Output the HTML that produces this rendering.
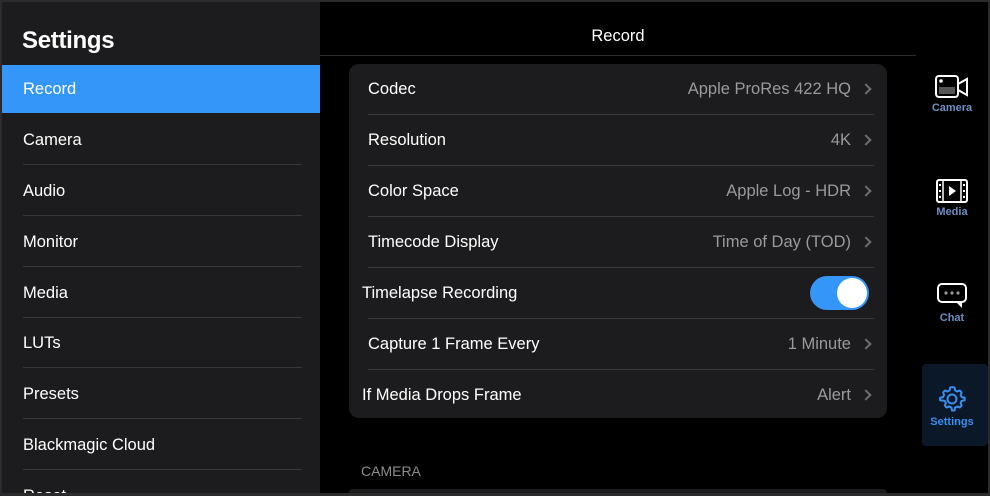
<!DOCTYPE html>
<html><head><style>
*{margin:0;padding:0;box-sizing:border-box}
html,body{width:990px;height:496px;overflow:hidden}
body{background:#2b2b2b;font-family:"Liberation Sans",sans-serif;position:relative}
#f{position:absolute;left:2px;top:2px;width:986px;height:491px;background:#000;overflow:hidden}
#side{position:absolute;left:0;top:0;width:318px;height:491px;background:#1c1c1e}
#side h1{position:absolute;left:20px;top:25px;font-size:24px;color:#fff;font-weight:bold;letter-spacing:-0.3px}
.si{position:absolute;left:0;width:318px;height:50px;color:#fff;font-size:16.5px;line-height:50px;padding-left:21px}
.si:after{content:"";position:absolute;left:21px;right:18px;bottom:0;height:1px;background:#38383a}
.sel{background:#3396f8;height:48px;line-height:48px}
.sel:after{display:none}
#main{position:absolute;left:318px;top:0;width:596px;height:491px;background:#000}
#hdr{position:absolute;left:0;top:0;width:596px;height:54px;border-bottom:1px solid #2c2c2e;color:#fff;font-size:16.5px;text-align:center;line-height:68px}
#card{position:absolute;left:29px;top:62px;width:538px;height:354px;background:#1c1c1e;border-radius:10px}
.r{position:absolute;left:0;width:538px;height:51px;color:#fff;font-size:16.5px;line-height:51px;padding-left:19px}
.r:after{content:"";position:absolute;left:19px;right:13px;bottom:0;height:1px;background:#3a3a3c}
.r.l:after{display:none}
.v{position:absolute;right:36px;top:0;color:#9a9a9e}
.c{position:absolute;right:17px;top:21px;width:8px;height:8px;border-right:2px solid #6e6e72;border-top:2px solid #6e6e72;transform:rotate(45deg)}
.tg{position:absolute;left:461px;top:8px;width:59px;height:34px;border-radius:17px;background:#3396f8}
.tg i{position:absolute;right:2px;top:2px;width:30px;height:30px;border-radius:50%;background:#fff}
#cam{position:absolute;left:41px;top:461px;color:#8e8e92;font-size:14px}
#card2{position:absolute;left:29px;top:487px;width:538px;height:4px;background:#1c1c1e;border-radius:10px 10px 0 0}
#rail{position:absolute;left:914px;top:0;width:72px;height:491px;background:#000}
.ri{position:absolute;left:0;width:72px;text-align:center;color:#6d8fc4;font-size:11px;font-weight:bold}
.ri svg{display:block;margin:0 auto 2px}
#st{position:absolute;left:6px;top:362px;width:66px;height:82px;background:#0b1828;border-radius:4px}
</style></head><body><div id="f">
<div id="side"><h1>Settings</h1>
<div class="si sel" style="top:63px">Record</div>
<div class="si" style="top:113px">Camera</div>
<div class="si" style="top:164px">Audio</div>
<div class="si" style="top:215px">Monitor</div>
<div class="si" style="top:266px">Media</div>
<div class="si" style="top:316px">LUTs</div>
<div class="si" style="top:367px">Presets</div>
<div class="si" style="top:418px">Blackmagic Cloud</div>
<div class="si" style="top:469px">Reset</div>
</div>
<div id="main"><div id="hdr">Record</div>
<div id="card">
<div class="r" style="top:0">Codec<span class="v">Apple ProRes 422 HQ</span><span class="c"></span></div>
<div class="r" style="top:51px">Resolution<span class="v">4K</span><span class="c"></span></div>
<div class="r" style="top:102px">Color Space<span class="v">Apple Log - HDR</span><span class="c"></span></div>
<div class="r" style="top:153px">Timecode Display<span class="v">Time of Day (TOD)</span><span class="c"></span></div>
<div class="r" style="top:204px;padding-left:13px">Timelapse Recording<span class="tg"><i></i></span></div>
<div class="r" style="top:255px">Capture 1 Frame Every<span class="v">1 Minute</span><span class="c"></span></div>
<div class="r l" style="top:306px;padding-left:13px">If Media Drops Frame<span class="v">Alert</span><span class="c"></span></div>
</div>
<div id="cam">CAMERA</div><div id="card2"></div>
</div>
<div id="rail">
<div class="ri" style="top:72px"><svg width="36" height="26" viewBox="0 0 36 26"><rect x="2" y="2" width="22" height="21" rx="3" fill="none" stroke="#fff" stroke-width="2"/><path d="M24 10l9-5v16l-9-5" fill="none" stroke="#fff" stroke-width="2"/><circle cx="7" cy="7" r="1.8" fill="#fff"/><rect x="5" y="13" width="16" height="7" fill="#555"/></svg>Camera</div>
<div class="ri" style="top:176px"><svg width="34" height="26" viewBox="0 0 34 26"><rect x="2" y="2" width="30" height="22" rx="2" fill="none" stroke="#fff" stroke-width="2"/><path d="M5 6v2M5 12v2M5 18v2M29 6v2M29 12v2M29 18v2" stroke="#fff" stroke-width="2"/><path d="M8 2v22M26 2v22" stroke="#fff" stroke-width="1.5"/><path d="M14 8l7 5-7 5z" fill="#fff"/></svg>Media</div>
<div class="ri" style="top:280px"><svg width="32" height="28" viewBox="0 0 32 28"><rect x="2" y="2" width="28" height="18" rx="4" fill="none" stroke="#fff" stroke-width="2"/><path d="M20 20l6 6v-6z" fill="#fff"/><circle cx="10" cy="11" r="1.6" fill="#999"/><circle cx="16" cy="11" r="1.6" fill="#999"/><circle cx="22" cy="11" r="1.6" fill="#999"/></svg>Chat</div>
<div id="st"></div>
<div class="ri" style="top:382px;color:#3a8ef0"><svg width="30" height="30" viewBox="0 0 24 24"><path d="M12 2.5l2 .3.5 2.3 1.6.9 2.2-.8 1.4 1.5-.8 2.2.9 1.6 2.3.5v2l-2.3.5-.9 1.6.8 2.2-1.4 1.5-2.2-.8-1.6.9-.5 2.3h-2l-.5-2.3-1.6-.9-2.2.8-1.4-1.5.8-2.2-.9-1.6L2.5 13v-2l2.3-.5.9-1.6-.8-2.2 1.4-1.5 2.2.8 1.6-.9.5-2.3z" fill="none" stroke="#3a8ef0" stroke-width="1.6" stroke-linejoin="round"/><circle cx="12" cy="12" r="3.6" fill="none" stroke="#3a8ef0" stroke-width="1.6"/></svg>Settings</div>
</div>
</div></body></html>
